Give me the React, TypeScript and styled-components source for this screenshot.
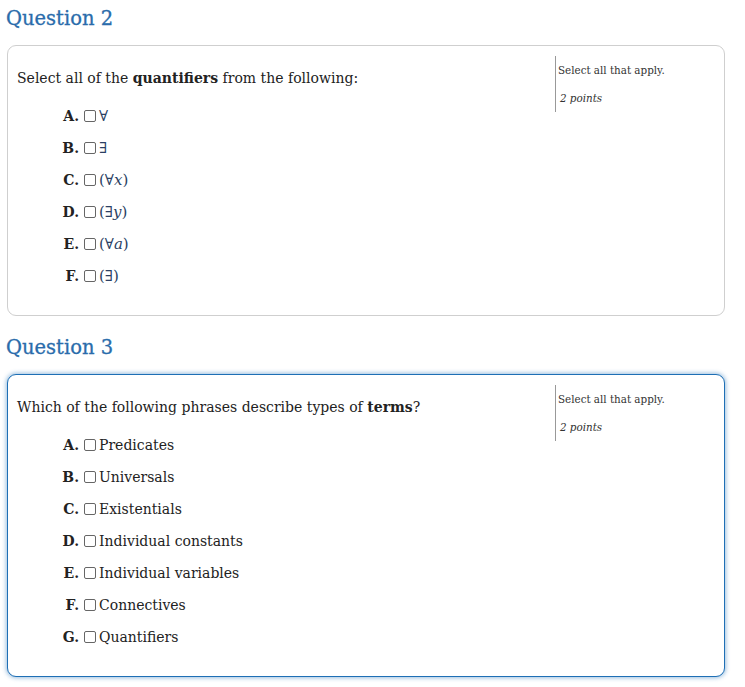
import React from "react";
import styled, { createGlobalStyle } from "styled-components";

const GlobalStyle = createGlobalStyle`
  body {
    margin: 0;
    background: #fff;
    font-family: "DejaVu Serif", Georgia, serif;
    color: #222;
  }
`;

type Option = { letter: string; content: React.ReactNode };

type QuestionProps = {
  number: number;
  prompt: React.ReactNode;
  options: Option[];
  active?: boolean;
};

const Q = ({ children }: { children: React.ReactNode }) => <MathText>{children}</MathText>;

const Question = ({ number, prompt, options, active }: QuestionProps) => (
  <Section>
    <Heading>Question {number}</Heading>
    <Card $active={active}>
      <Body>
        <Prompt>{prompt}</Prompt>
        <OptionList>
          {options.map((o) => (
            <OptionRow key={o.letter}>
              <Letter>{o.letter}.</Letter>
              <Box />
              <OptionText>{o.content}</OptionText>
            </OptionRow>
          ))}
        </OptionList>
      </Body>
      <Side>
        <SideNote>Select all that apply.</SideNote>
        <Points>2 points</Points>
      </Side>
    </Card>
  </Section>
);

const App = () => (
  <Page>
    <GlobalStyle />
    <Question
      number={2}
      prompt={
        <>
          Select all of the <b>quantifiers</b> from the following:
        </>
      }
      options={[
        { letter: "A", content: <Q>∀</Q> },
        { letter: "B", content: <Q>∃</Q> },
        { letter: "C", content: <Q>(∀<i>x</i>)</Q> },
        { letter: "D", content: <Q>(∃<i>y</i>)</Q> },
        { letter: "E", content: <Q>(∀<i>a</i>)</Q> },
        { letter: "F", content: <Q>(∃)</Q> },
      ]}
    />
    <Question
      number={3}
      active
      prompt={
        <>
          Which of the following phrases describe types of <b>terms</b>?
        </>
      }
      options={[
        { letter: "A", content: "Predicates" },
        { letter: "B", content: "Universals" },
        { letter: "C", content: "Existentials" },
        { letter: "D", content: "Individual constants" },
        { letter: "E", content: "Individual variables" },
        { letter: "F", content: "Connectives" },
        { letter: "G", content: "Quantifiers" },
      ]}
    />
  </Page>
);

export default App;

const Page = styled.div`
  padding: 6px 20px 0 7px;
`;

const Section = styled.section`
  margin-bottom: 19px;
`;

const Heading = styled.h2`
  margin: 0 0 13px -1px;
  font-size: 19.5px;
  line-height: 26px;
  font-weight: normal;
  color: #2a6cab;
  -webkit-text-stroke: 0.3px #2a6cab;
`;

const Card = styled.div<{ $active?: boolean }>`
  display: flex;
  border: 1px solid ${({ $active }) => ($active ? "#1e6fb5" : "#cfcfcf")};
  border-radius: 9px;
  box-shadow: ${({ $active }) => ($active ? "0 0 4px 1px rgba(30,111,181,0.45)" : "none")};
  background: #fff;
`;

const Body = styled.div`
  flex: 1;
  padding: 20px 0 27px 9px;
`;

const Prompt = styled.p`
  margin: 0 0 14px;
  font-size: 14px;
  line-height: 24px;
`;

const OptionList = styled.ol`
  list-style: none;
  margin: 0;
  padding: 0 0 0 32px;
  display: flex;
  flex-direction: column;
  gap: 8px;
`;

const OptionRow = styled.li`
  display: flex;
  align-items: center;
  height: 24px;
  font-size: 14px;
`;

const Letter = styled.span`
  width: 30px;
  text-align: right;
  font-weight: bold;
  margin-right: 5px;
`;

const Box = styled.span`
  width: 10px;
  height: 10px;
  border: 1px solid #666;
  border-radius: 2px;
  margin-right: 3px;
`;

const OptionText = styled.span`
  white-space: nowrap;
`;

const MathText = styled.span`
  font-family: "DejaVu Serif", serif;
  font-size: 15px;
  color: #2b3f63;
  i {
    font-style: italic;
  }
`;

const Side = styled.aside`
  width: 166px;
  margin-top: 10px;
  align-self: flex-start;
  border-left: 1px solid #999;
  padding: 6px 0 6px 2px;
`;

const SideNote = styled.div`
  font-family: "DejaVu Serif Condensed", "DejaVu Serif", serif;
  font-size: 11.5px;
  line-height: 16px;
  color: #333;
`;

const Points = styled.div`
  margin-top: 12px;
  padding-left: 2px;
  font-family: "DejaVu Serif Condensed", "DejaVu Serif", serif;
  font-style: italic;
  font-size: 11.5px;
  line-height: 16px;
  color: #333;
`;
